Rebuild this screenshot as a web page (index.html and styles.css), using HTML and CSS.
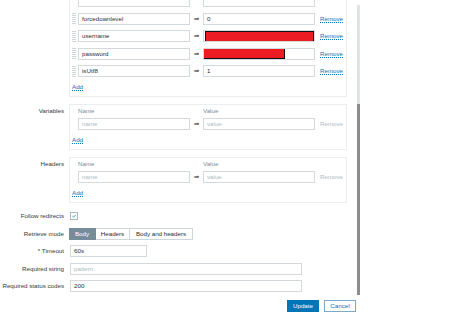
FILE: index.html
```html
<!DOCTYPE html>
<html>
<head>
<meta charset="utf-8">
<link rel="stylesheet" href="styles.css">
</head>
<body>
<div class="modal">
  <div class="scroll-area">
    <div class="form">
      <div class="frow">
        <div class="lbl"></div>
        <div class="box">
          <div class="kv">
            <div class="handle blank"></div>
            <div class="inp name"></div>
            <div class="arrow"></div>
            <div class="inp value"></div>
            <div class="rm"></div>
          </div>
          <div class="kv">
            <div class="handle"></div>
            <div class="inp name">forcedownlevel</div>
            <div class="arrow">⇒</div>
            <div class="inp value">0</div>
            <div class="rm"><a class="link">Remove</a></div>
          </div>
          <div class="kv">
            <div class="handle"></div>
            <div class="inp name">username</div>
            <div class="arrow">⇒</div>
            <div class="inp value"><span class="redact redact-user"></span></div>
            <div class="rm"><a class="link">Remove</a></div>
          </div>
          <div class="kv">
            <div class="handle"></div>
            <div class="inp name">password</div>
            <div class="arrow">⇒</div>
            <div class="inp value"><span class="redact redact-pass"></span></div>
            <div class="rm"><a class="link">Remove</a></div>
          </div>
          <div class="kv">
            <div class="handle"></div>
            <div class="inp name">isUtf8</div>
            <div class="arrow">⇒</div>
            <div class="inp value">1</div>
            <div class="rm"><a class="link">Remove</a></div>
          </div>
          <div class="add"><a class="link">Add</a></div>
        </div>
      </div>

      <div class="frow gap7">
        <div class="lbl top">Variables</div>
        <div class="box box2">
          <div class="kvh"><span class="hname">Name</span><span class="hvalue">Value</span></div>
          <div class="kv">
            <div class="handle blank"></div>
            <div class="inp name ph">name</div>
            <div class="arrow">⇒</div>
            <div class="inp value ph">value</div>
            <div class="rm"><span class="link-dis">Remove</span></div>
          </div>
          <div class="add"><a class="link">Add</a></div>
        </div>
      </div>

      <div class="frow gap7">
        <div class="lbl top">Headers</div>
        <div class="box box2">
          <div class="kvh"><span class="hname">Name</span><span class="hvalue">Value</span></div>
          <div class="kv">
            <div class="handle blank"></div>
            <div class="inp name ph">name</div>
            <div class="arrow">⇒</div>
            <div class="inp value ph">value</div>
            <div class="rm"><span class="link-dis">Remove</span></div>
          </div>
          <div class="add"><a class="link">Add</a></div>
        </div>
      </div>

      <div class="frow gap7 line">
        <div class="lbl">Follow redirects</div>
        <div class="fld">
          <span class="chk"><svg viewBox="0 0 8 8" width="8" height="8"><path d="M1.8 4.1 L3.4 5.6 L6.3 2.5" fill="none" stroke="#0275b8" stroke-width="1"/></svg></span>
        </div>
      </div>

      <div class="frow gap55 line">
        <div class="lbl">Retrieve mode</div>
        <div class="fld seg-wrap">
          <div class="seg">
            <span class="opt sel w1">Body</span><span class="opt w2">Headers</span><span class="opt w3">Body and headers</span>
          </div>
        </div>
      </div>

      <div class="frow gap55 line">
        <div class="lbl">* Timeout</div>
        <div class="fld"><div class="inp f-short">60s</div></div>
      </div>

      <div class="frow gap55 line">
        <div class="lbl">Required string</div>
        <div class="fld"><div class="inp f-long ph">pattern</div></div>
      </div>

      <div class="frow gap55 line">
        <div class="lbl">Required status codes</div>
        <div class="fld"><div class="inp f-long">200</div></div>
      </div>
    </div>
    <div class="scrollbar"><div class="thumb"></div></div>
  </div>
  <div class="footer">
    <button class="btn">Update</button>
    <button class="btn alt">Cancel</button>
  </div>
</div>
</body>
</html>
```

FILE: styles.css
```css
html, body {
  margin: 0;
  padding: 0;
  background: #ffffff;
}
body {
  font-family: "Liberation Sans", Arial, sans-serif;
  font-size: 6.2px;
  color: #1f2c33;
  overflow: hidden;
}
.modal {
  width: 360px;
}
.scroll-area {
  display: flex;
  height: 295px;
  overflow: hidden;
}
.form {
  width: 357px;
  margin-top: -10px;
}
.frow {
  display: grid;
  grid-template-columns: 64px 278px;
  column-gap: 5px;
}
.gap7 { margin-top: 7px; }
.gap55 { margin-top: 5.5px; }
.lbl {
  text-align: right;
  line-height: 12px;
  white-space: nowrap;
  color: #2e3a40;
}
.lbl.top {
  line-height: 8px;
  padding-top: 2.5px;
}
.line { height: 12px; }
.box {
  border: 1px solid #ebeef0;
  padding: 4px 2px 5px 2px;
}
.box2 { padding-top: 2px; }
.kv {
  display: flex;
  align-items: center;
  height: 12px;
  margin-bottom: 5.5px;
}
.kv:last-of-type { margin-bottom: 0; }
.handle {
  width: 4px;
  height: 11px;
  margin-right: 2px;
  background: repeating-linear-gradient(to bottom, #cfd4d7 0 1px, transparent 1px 2px);
}
.handle.blank { background: none; }
.inp {
  box-sizing: border-box;
  height: 12px;
  border: 1px solid #d3d9dc;
  padding: 0 3px;
  line-height: 10px;
  white-space: nowrap;
  overflow: hidden;
  background: #fff;
  color: #1f2c33;
}
.inp.name, .inp.value { width: 112px; }
.inp.value { position: relative; }
.ph { color: #acbbc2; }
.arrow {
  width: 13px;
  text-align: center;
  line-height: 12px;
  color: #1f2c33;
  font-family: "DejaVu Sans", sans-serif;
  font-size: 6.5px;
}
.rm {
  padding-left: 5px;
  line-height: 12px;
}
.link {
  color: #0275b8;
  text-decoration: none;
  border-bottom: 1px dotted #0275b8;
  line-height: 7px;
  display: inline-block;
}
.link-dis { color: #acbbc2; }
.redact {
  position: absolute;
  background: #ec1c24;
  border: 1px solid #111;
  box-sizing: border-box;
}
.redact-user { left: 1px; right: 0; top: 0; bottom: -1px; }
.redact-pass { left: -1px; width: 82px; top: -0.5px; bottom: -0.5px; }
.add {
  margin-top: 6px;
  height: 8px;
  line-height: 8px;
}
.kvh {
  height: 8px;
  line-height: 8px;
  margin-bottom: 3px;
  position: relative;
  color: #768d99;
}
.hname { position: absolute; left: 6px; }
.hvalue { position: absolute; left: 131px; }
.fld {
  display: flex;
  align-items: center;
  height: 12px;
}
.chk {
  box-sizing: border-box;
  width: 8px;
  height: 8px;
  margin-left: 1px;
  border: 1px solid #acbbc2;
  display: flex;
  align-items: center;
  justify-content: center;
}
.chk svg { display: block; }
.seg {
  display: flex;
  height: 12px;
}
.opt {
  box-sizing: border-box;
  height: 12px;
  line-height: 10px;
  border: 1px solid #cfd6da;
  border-left: none;
  text-align: center;
  background: #fff;
}
.opt.sel {
  background: #768d99;
  border-color: #768d99;
  color: #fff;
}
.w1 { width: 27px; }
.w2 { width: 34px; }
.w3 { width: 63px; }
.f-short { width: 77px; margin-left: 1px; }
.f-long { width: 232px; margin-left: 1px; }
.scrollbar {
  width: 3.5px;
  margin-top: 5px;
  height: 290px;
  background: #dfe4e7;
  display: flex;
  flex-direction: column;
}
.thumb {
  margin-top: 99px;
  flex: 1;
  background: #8c8c8c;
}
.footer {
  display: flex;
  justify-content: flex-end;
  gap: 5px;
  padding-top: 5px;
  padding-right: 4px;
}
.btn {
  box-sizing: border-box;
  width: 32px;
  height: 12px;
  padding: 0;
  margin: 0;
  border: 1px solid #0275b8;
  background: #0275b8;
  color: #fff;
  font-family: "Liberation Sans", Arial, sans-serif;
  font-size: 6.2px;
  line-height: 10px;
}
.btn.alt {
  background: #fff;
  color: #0275b8;
  border-color: #7fa9c6;
}
```
